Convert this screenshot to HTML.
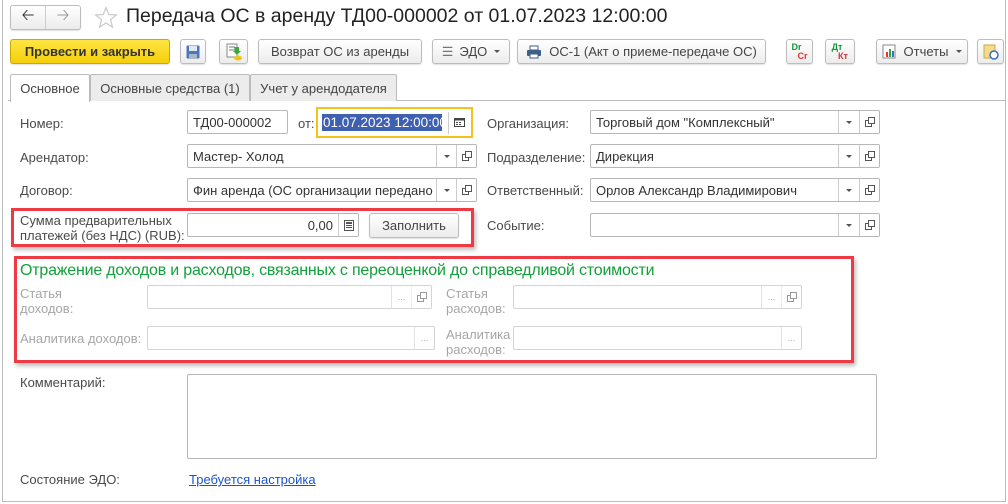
<!DOCTYPE html>
<html><head><meta charset="utf-8"><style>
*{box-sizing:border-box;margin:0;padding:0}
body{width:1008px;height:504px;background:#fff;font-family:"Liberation Sans",Arial,sans-serif;font-size:13px;color:#333;position:relative;overflow:hidden}
.a{position:absolute}
.btn{position:absolute;border:1px solid #bdbdbd;border-radius:3px;background:linear-gradient(#fff,#ececec);box-shadow:0 1px 1px rgba(0,0,0,.12);color:#444;display:flex;align-items:center;justify-content:center;white-space:nowrap}
.lbl{position:absolute;color:#4a4a4a;white-space:nowrap}
.fld{position:absolute;border:1px solid #b7b7b7;border-radius:2px;background:#fff;height:24px;color:#333;padding:4px 5px;white-space:nowrap;overflow:hidden}
.dd{position:absolute;top:0;bottom:0;width:20px;border-left:1px solid #ccc;display:flex;align-items:center;justify-content:center;font-size:8px;color:#555;background:#fff}
.tri{width:0;height:0;border-left:3px solid transparent;border-right:3px solid transparent;border-top:3px solid #555}
.dis{border-color:#d4d4d4}
.dis .dd{border-color:#e2e2e2;color:#aaa}
.tab{position:absolute;top:74px;height:27px;border:1px solid #bbb;border-bottom:none;background:#ececec;color:#444;display:flex;align-items:center;justify-content:center;border-radius:2px 2px 0 0}
.red{position:absolute;border:3px solid #ee3b43;box-shadow:2px 3px 4px rgba(0,0,0,.25)}
</style></head><body>
<svg width="0" height="0" style="position:absolute"><defs><g id="op"><rect x="0.5" y="3.5" width="6" height="6" fill="none" stroke="#555"/><rect x="3.5" y="0.5" width="6" height="6" fill="#fff" stroke="#555"/></g></defs></svg>
<div class="a" style="left:2px;top:0;width:1004px;height:502px;border:1px solid #bcbcbc;border-top:none"></div>

<div class="btn" style="left:10px;top:5px;width:71px;height:25px;border-radius:3px;justify-content:flex-start">
 <span style="width:35px;text-align:center;font-size:16px;color:#333">&#129120;</span>
 <span style="width:1px;height:23px;background:#ccc"></span>
 <span style="width:35px;text-align:center;font-size:16px;color:#999">&#129122;</span>
</div>
<svg class="a" style="left:94px;top:6px" width="24" height="23" viewBox="0 0 24 23"><polygon points="12,1.5 14.8,8.6 22.4,8.9 16.5,13.8 18.5,21.2 12,17 5.5,21.2 7.5,13.8 1.6,8.9 9.2,8.6" fill="none" stroke="#c8c8c8" stroke-width="1.2"/></svg>
<div class="a" style="left:126px;top:5px;font-size:19.5px;color:#222;white-space:nowrap">Передача ОС в аренду ТД00-000002 от 01.07.2023 12:00:00</div>

<div class="btn" style="left:10px;top:39px;width:160px;height:25px;background:linear-gradient(#ffe643,#f5cf0b);border-color:#c9a800;color:#333;font-weight:bold">Провести и закрыть</div>
<div class="btn" style="left:180px;top:39px;width:26px;height:25px"><svg width="14" height="14"><rect x="0.5" y="0.5" width="13" height="13" rx="1" fill="#4b79b8"/><rect x="3" y="1" width="8" height="5" fill="#dfe8f4"/><rect x="3" y="9" width="8" height="5" fill="#a9b7c9"/></svg></div>
<div class="btn" style="left:219px;top:39px;width:29px;height:25px"><svg width="18" height="18"><rect x="2" y="1" width="10" height="13" fill="#fff" stroke="#888"/><line x1="4" y1="4" x2="10" y2="4" stroke="#777"/><line x1="4" y1="7" x2="10" y2="7" stroke="#777"/><path d="M9 4h5v4h2l-4 4-4-4h2z" fill="#3bab3b"/><ellipse cx="13" cy="15" rx="4" ry="2.5" fill="#f2c318"/></svg></div>
<div class="btn" style="left:258px;top:39px;width:164px;height:25px">Возврат ОС из аренды</div>
<div class="btn" style="left:432px;top:39px;width:78px;height:25px"><span style="color:#777;margin-right:6px">&#9776;</span>ЭДО <span class="tri" style="margin-left:7px"></span></div>
<div class="btn" style="left:517px;top:39px;width:249px;height:25px"><svg width="16" height="14" style="margin-right:7px"><rect x="4" y="1" width="8" height="4" fill="#fff" stroke="#3e5f8a"/><rect x="1" y="5" width="14" height="6" rx="1" fill="#3e5f8a"/><rect x="4" y="9" width="8" height="4" fill="#fff" stroke="#3e5f8a"/></svg>ОС-1 (Акт о приеме-передаче ОС)</div>
<div class="btn" style="left:786px;top:39px;width:27px;height:25px;font-size:9px;font-weight:bold;line-height:9px;flex-direction:column"><span style="color:#129a3a;margin-left:-6px">Dr</span><span style="color:#e23030;margin-left:6px">Cr</span></div>
<div class="btn" style="left:825px;top:39px;width:30px;height:25px;font-size:9px;font-weight:bold;line-height:9px;flex-direction:column"><span style="color:#129a3a;margin-left:-6px">Дт</span><span style="color:#e23030;margin-left:6px">Кт</span></div>
<div class="btn" style="left:876px;top:39px;width:92px;height:25px"><svg width="16" height="15" style="margin-right:6px"><rect x="1" y="1" width="12" height="13" fill="#fff" stroke="#888"/><rect x="4" y="8" width="2" height="5" fill="#e33"/><rect x="7" y="5" width="2" height="8" fill="#3a3"/><rect x="10" y="7" width="2" height="6" fill="#37c"/></svg>Отчеты <span class="tri" style="margin-left:8px"></span></div>
<div class="btn" style="left:977px;top:39px;width:27px;height:25px"><svg width="16" height="16"><rect x="1" y="1" width="11" height="13" fill="#f5dc8a" stroke="#c9a84a"/><circle cx="11" cy="11" r="4" fill="#fff" stroke="#3a6fb6" stroke-width="1.5"/></svg></div>

<div class="a" style="left:8px;top:100px;width:998px;height:1px;background:#bbb"></div>
<div class="tab" style="left:10px;width:80px;background:#fff;height:28px">Основное</div>
<div class="tab" style="left:90px;width:160px">Основные средства (1)</div>
<div class="tab" style="left:250px;width:147px">Учет у арендодателя</div>

<div class="lbl" style="left:20px;top:116px">Номер:</div>
<div class="fld" style="left:187px;top:110px;width:101px">ТД00-000002</div>
<div class="lbl" style="left:298px;top:116px">от:</div>
<div class="a" style="left:316px;top:107px;width:157px;height:31px;border:2px solid #f3c21d"></div>
<div class="a" style="left:322px;top:114px;width:120px;height:17px;background:#3f5fb0;color:#fff;padding-left:1px;line-height:17px;font-size:13.5px;overflow:hidden;white-space:nowrap">01.07.2023 12:00:00</div>
<div class="a" style="left:448px;top:112px;width:1px;height:22px;background:#ccc"></div>
<svg class="a" style="left:454px;top:117px" width="11" height="10"><rect x="0.5" y="1.5" width="10" height="8" fill="none" stroke="#444"/><rect x="0.5" y="1.5" width="10" height="2" fill="#444"/><rect x="2" y="5" width="2" height="1" fill="#444"/><rect x="5" y="5" width="2" height="1" fill="#444"/><rect x="2" y="7" width="2" height="1" fill="#444"/><rect x="5" y="7" width="2" height="1" fill="#444"/></svg>

<div class="lbl" style="left:20px;top:150px">Арендатор:</div>
<div class="fld" style="left:187px;top:144px;width:290px">Мастер- Холод<div class="dd" style="right:20px"><span class="tri"></span></div><div class="dd" style="right:0"><svg width="10" height="10"><use href="#op"/></svg></div></div>
<div class="lbl" style="left:20px;top:183px">Договор:</div>
<div class="fld" style="left:187px;top:178px;width:290px">Фин аренда (ОС организации передано<div class="dd" style="right:20px"><span class="tri"></span></div><div class="dd" style="right:0"><svg width="10" height="10"><use href="#op"/></svg></div></div>

<div class="red" style="left:11px;top:208px;width:463px;height:39px"></div>
<div class="lbl" style="left:20px;top:213px;line-height:15px">Сумма предварительных<br>платежей (без НДС) (RUB):</div>
<div class="fld" style="left:187px;top:213px;width:172px;text-align:right;padding-right:25px">0,00<div class="dd" style="right:0"><svg width="10" height="11"><rect x="0.5" y="0.5" width="9" height="10" fill="none" stroke="#555"/><rect x="2" y="2" width="6" height="2" fill="#555"/><rect x="2" y="5" width="6" height="1" fill="#555"/><rect x="2" y="7" width="6" height="1" fill="#555"/></svg></div></div>
<div class="btn" style="left:369px;top:213px;width:90px;height:25px">Заполнить</div>

<div class="lbl" style="left:487px;top:116px">Организация:</div>
<div class="fld" style="left:590px;top:110px;width:290px">Торговый дом "Комплексный"<div class="dd" style="right:21px"><span class="tri"></span></div><div class="dd" style="right:0"><svg width="10" height="10"><use href="#op"/></svg></div></div>
<div class="lbl" style="left:487px;top:150px">Подразделение:</div>
<div class="fld" style="left:590px;top:144px;width:290px">Дирекция<div class="dd" style="right:21px"><span class="tri"></span></div><div class="dd" style="right:0"><svg width="10" height="10"><use href="#op"/></svg></div></div>
<div class="lbl" style="left:487px;top:183px">Ответственный:</div>
<div class="fld" style="left:590px;top:178px;width:290px">Орлов Александр Владимирович<div class="dd" style="right:21px"><span class="tri"></span></div><div class="dd" style="right:0"><svg width="10" height="10"><use href="#op"/></svg></div></div>
<div class="lbl" style="left:487px;top:218px">Событие:</div>
<div class="fld" style="left:590px;top:213px;width:290px"><div class="dd" style="right:21px"><span class="tri"></span></div><div class="dd" style="right:0"><svg width="10" height="10"><use href="#op"/></svg></div></div>

<div class="red" style="left:14px;top:256px;width:840px;height:107px"></div>
<div class="a" style="left:20px;top:262px;font-size:16px;color:#12a03a;white-space:nowrap;letter-spacing:-0.2px">Отражение доходов и расходов, связанных с переоценкой до справедливой стоимости</div>
<div class="lbl" style="left:20px;top:286px;line-height:15px;color:#a6a6a6">Статья<br>доходов:</div>
<div class="fld dis" style="left:147px;top:285px;width:285px"><div class="dd" style="right:20px;font-size:9px">...</div><div class="dd" style="right:0;opacity:.6"><svg width="10" height="10"><use href="#op"/></svg></div></div>
<div class="lbl" style="left:446px;top:286px;line-height:15px;color:#a6a6a6">Статья<br>расходов:</div>
<div class="fld dis" style="left:513px;top:285px;width:289px"><div class="dd" style="right:20px;font-size:9px">...</div><div class="dd" style="right:0;opacity:.6"><svg width="10" height="10"><use href="#op"/></svg></div></div>
<div class="lbl" style="left:20px;top:331px;color:#a6a6a6">Аналитика доходов:</div>
<div class="fld dis" style="left:147px;top:326px;width:288px"><div class="dd" style="right:0;font-size:9px">...</div></div>
<div class="lbl" style="left:446px;top:327px;line-height:15px;color:#a6a6a6">Аналитика<br>расходов:</div>
<div class="fld dis" style="left:513px;top:326px;width:289px"><div class="dd" style="right:0;font-size:9px">...</div></div>

<div class="lbl" style="left:20px;top:375px">Комментарий:</div>
<div class="fld" style="left:187px;top:374px;width:690px;height:85px"></div>
<div class="lbl" style="left:20px;top:472px">Состояние ЭДО:</div>
<div class="a" style="left:189px;top:472px;color:#1a55c8;text-decoration:underline;white-space:nowrap">Требуется настройка</div>
</body></html>
